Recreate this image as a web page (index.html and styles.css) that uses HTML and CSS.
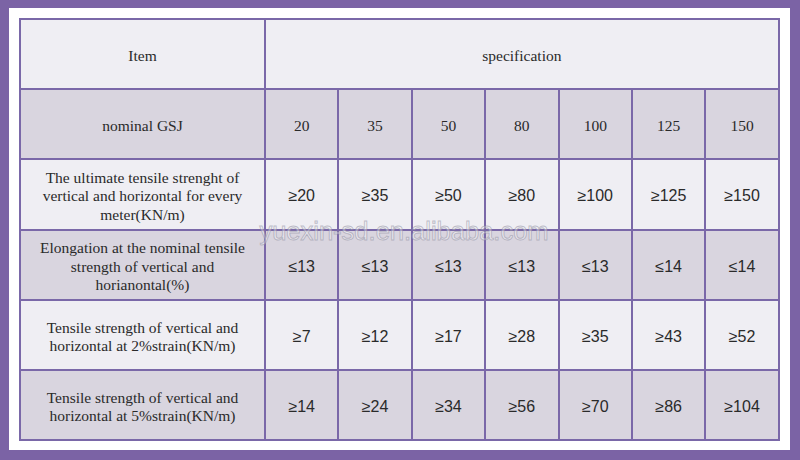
FILE: index.html
```html
<!DOCTYPE html>
<html>
<head>
<meta charset="utf-8">
<link rel="stylesheet" href="styles.css">
</head>
<body>
<div class="frame">
  <table class="spec">
    <colgroup>
      <col class="c-item">
      <col class="c-val"><col class="c-val"><col class="c-val"><col class="c-val"><col class="c-val"><col class="c-val"><col class="c-val">
    </colgroup>
    <tr class="light r-head">
      <td class="label">Item</td>
      <td class="label" colspan="7">specification</td>
    </tr>
    <tr class="dark r2">
      <td class="label">nominal GSJ</td>
      <td class="label">20</td><td class="label">35</td><td class="label">50</td><td class="label">80</td><td class="label">100</td><td class="label">125</td><td class="label">150</td>
    </tr>
    <tr class="light r3">
      <td class="label">The ultimate tensile strenght of vertical and horizontal for every meter(KN/m)</td>
      <td>≥20</td><td>≥35</td><td>≥50</td><td>≥80</td><td>≥100</td><td>≥125</td><td>≥150</td>
    </tr>
    <tr class="dark r4">
      <td class="label">Elongation at the nominal tensile strength of vertical and horianontal(%)</td>
      <td>≤13</td><td>≤13</td><td>≤13</td><td>≤13</td><td>≤13</td><td>≤14</td><td>≤14</td>
    </tr>
    <tr class="light r5">
      <td class="label">Tensile strength of vertical and horizontal at 2%strain(KN/m)</td>
      <td>≥7</td><td>≥12</td><td>≥17</td><td>≥28</td><td>≥35</td><td>≥43</td><td>≥52</td>
    </tr>
    <tr class="dark r6">
      <td class="label">Tensile strength of vertical and horizontal at 5%strain(KN/m)</td>
      <td>≥14</td><td>≥24</td><td>≥34</td><td>≥56</td><td>≥70</td><td>≥86</td><td>≥104</td>
    </tr>
  </table>
  <div class="watermark">yuexin-sd.en.alibaba.com</div>
</div>
</body>
</html>
```

FILE: styles.css
```css
html, body {
  margin: 0;
  padding: 0;
}
body {
  background: #7b63a5;
  width: 800px;
  height: 460px;
  overflow: hidden;
}
.frame {
  position: relative;
  background: #ffffff;
  margin: 8px 10px 0 9px;
  height: 442px;
  padding: 10px 0 0 10px;
  box-sizing: border-box;
}
.spec {
  border-collapse: collapse;
  width: 759px;
  table-layout: fixed;
  color: #2a2a2a;
  font-family: "Liberation Sans", Arial, sans-serif;
  font-size: 16px;
}
.c-item { width: 245px; }
.c-val { width: 73.4px; }
.spec td {
  border: 2px solid #7a68a8;
  text-align: center;
  vertical-align: middle;
  padding: 4px 6px 0;
  line-height: 18.5px;
}
.spec td.label {
  font-family: "Liberation Serif", "Times New Roman", serif;
  font-size: 15.5px;
}
.light td { background: #efeef3; }
.dark td { background: #d9d5df; }
.r-head { height: 70px; }
.r2 { height: 70px; }
.r3 { height: 71px; }
.r4 { height: 70px; }
.r5 { height: 70px; }
.r6 { height: 70px; }
.watermark {
  position: absolute;
  left: 242px;
  top: 209px;
  width: 306px;
  text-align: center;
  font-family: "Liberation Sans", Arial, sans-serif;
  font-size: 25.5px;
  color: rgba(255, 255, 255, 0.4);
  -webkit-text-stroke: 0.9px rgba(140, 140, 158, 0.55);
  pointer-events: none;
}
```
